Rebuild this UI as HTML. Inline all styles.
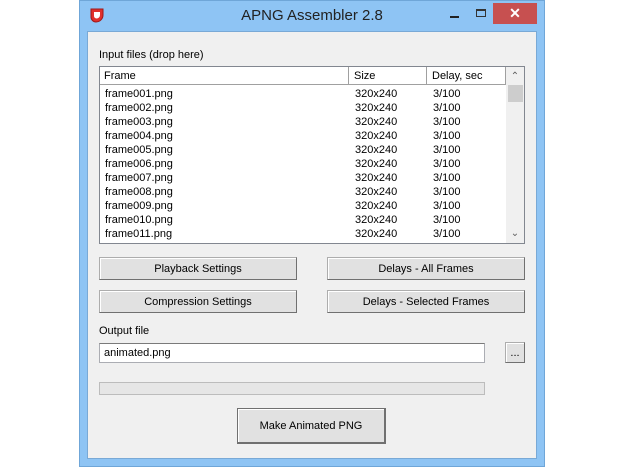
<!DOCTYPE html>
<html><head><style>
*{margin:0;padding:0;box-sizing:border-box}
body{width:624px;height:469px;background:#fff;position:relative;font-family:"Liberation Sans",sans-serif;font-size:11px;color:#000;overflow:hidden}
.a{position:absolute}
.btn{position:absolute;background:#e1e1e1;border:1px solid #adadad;border-right-color:#707070;border-bottom-color:#707070;box-shadow:inset 1px 1px 0 #fff;text-align:center;font-size:11px}
.row{position:absolute;left:5px;height:14px;line-height:14px;width:400px}
.row span{position:absolute}
</style></head><body>
<div class="a" style="left:79px;top:0;width:466px;height:467px;background:#8ec4f4;border:1px solid #6fa6d8"></div>
<div class="a" style="left:87px;top:31px;width:450px;height:428px;background:#f0f0f0;border:1px solid #79a9d6"></div>
<svg class="a" style="left:88px;top:6px" width="20" height="18" viewBox="0 0 20 18"><path d="M3 3h12v6a7 7 0 0 1-7 7a5 5 0 0 1-5-5z" fill="#e0302c" stroke="#a01818"/><path d="M6 6h6v3a3.5 3.5 0 0 1-3.5 3.5a2.5 2.5 0 0 1-2.5-2.5z" fill="#fff"/></svg>
<div class="a" style="left:79px;top:7px;width:466px;text-align:center;font-size:15px;color:#222">APNG Assembler 2.8</div>
<div class="a" style="left:450px;top:16px;width:9px;height:2px;background:#222"></div>
<div class="a" style="left:476px;top:9px;width:10px;height:8px;border:1px solid #333;border-top-width:2px"></div>
<div class="a" style="left:493px;top:3px;width:44px;height:21px;background:#c75050;color:#fff;text-align:center;font-size:14px;line-height:21px;font-weight:bold">✕</div>
<div class="a" style="left:99px;top:48px;line-height:14px">Input files (drop here)</div>
<div class="a" style="left:99px;top:66px;width:426px;height:178px;background:#fff;border:1px solid #828790">
 <div class="a" style="left:0;top:0;width:406px;height:18px;background:#fff;border-bottom:1px solid #e5e5e5"></div>
 <div class="a" style="left:0;top:0;width:249px;height:18px;border-right:1px solid #a0a0a0;border-bottom:1px solid #a0a0a0;padding:3px 4px">Frame</div>
 <div class="a" style="left:249px;top:0;width:78px;height:18px;border-right:1px solid #a0a0a0;border-bottom:1px solid #a0a0a0;padding:3px 5px">Size</div>
 <div class="a" style="left:327px;top:0;width:79px;height:18px;border-right:1px solid #a0a0a0;border-bottom:1px solid #a0a0a0;padding:3px 5px">Delay, sec</div>
 <div class="a" style="left:406px;top:0;width:18px;height:176px;background:#f0f0f0"></div>
 <div class="a" style="left:408px;top:18px;width:15px;height:17px;background:#cdcdcd"></div>
 <div class="a" style="left:406px;top:1px;width:18px;text-align:center;font-size:10px;color:#606060;line-height:18px">⌃</div>
 <div class="a" style="left:406px;top:158px;width:18px;text-align:center;font-size:10px;color:#606060;line-height:18px">⌄</div>
 <div class="row" style="top:20px"><span>frame001.png</span><span style="left:250px">320x240</span><span style="left:328px">3/100</span></div>
 <div class="row" style="top:34px"><span>frame002.png</span><span style="left:250px">320x240</span><span style="left:328px">3/100</span></div>
 <div class="row" style="top:48px"><span>frame003.png</span><span style="left:250px">320x240</span><span style="left:328px">3/100</span></div>
 <div class="row" style="top:62px"><span>frame004.png</span><span style="left:250px">320x240</span><span style="left:328px">3/100</span></div>
 <div class="row" style="top:76px"><span>frame005.png</span><span style="left:250px">320x240</span><span style="left:328px">3/100</span></div>
 <div class="row" style="top:90px"><span>frame006.png</span><span style="left:250px">320x240</span><span style="left:328px">3/100</span></div>
 <div class="row" style="top:104px"><span>frame007.png</span><span style="left:250px">320x240</span><span style="left:328px">3/100</span></div>
 <div class="row" style="top:118px"><span>frame008.png</span><span style="left:250px">320x240</span><span style="left:328px">3/100</span></div>
 <div class="row" style="top:132px"><span>frame009.png</span><span style="left:250px">320x240</span><span style="left:328px">3/100</span></div>
 <div class="row" style="top:146px"><span>frame010.png</span><span style="left:250px">320x240</span><span style="left:328px">3/100</span></div>
 <div class="row" style="top:160px"><span>frame011.png</span><span style="left:250px">320x240</span><span style="left:328px">3/100</span></div>
</div>
<div class="btn" style="left:99px;top:257px;width:198px;height:23px;line-height:22px">Playback Settings</div>
<div class="btn" style="left:327px;top:257px;width:198px;height:23px;line-height:22px">Delays - All Frames</div>
<div class="btn" style="left:99px;top:290px;width:198px;height:23px;line-height:22px">Compression Settings</div>
<div class="btn" style="left:327px;top:290px;width:198px;height:23px;line-height:22px">Delays - Selected Frames</div>
<div class="a" style="left:99px;top:324px;line-height:14px">Output file</div>
<div class="a" style="left:99px;top:343px;width:386px;height:20px;background:#fff;border:1px solid #abadb3;border-top-color:#7a7a7a;padding:3px 4px">animated.png</div>
<div class="btn" style="left:505px;top:342px;width:20px;height:21px;line-height:20px">...</div>
<div class="a" style="left:99px;top:382px;width:386px;height:13px;background:#e6e6e6;border:1px solid #bcbcbc"></div>
<div class="btn" style="left:237px;top:408px;width:149px;height:36px;line-height:34px;border:1px solid #707070;border-right-width:2px;border-bottom-width:2px">Make Animated PNG</div>
</body></html>
